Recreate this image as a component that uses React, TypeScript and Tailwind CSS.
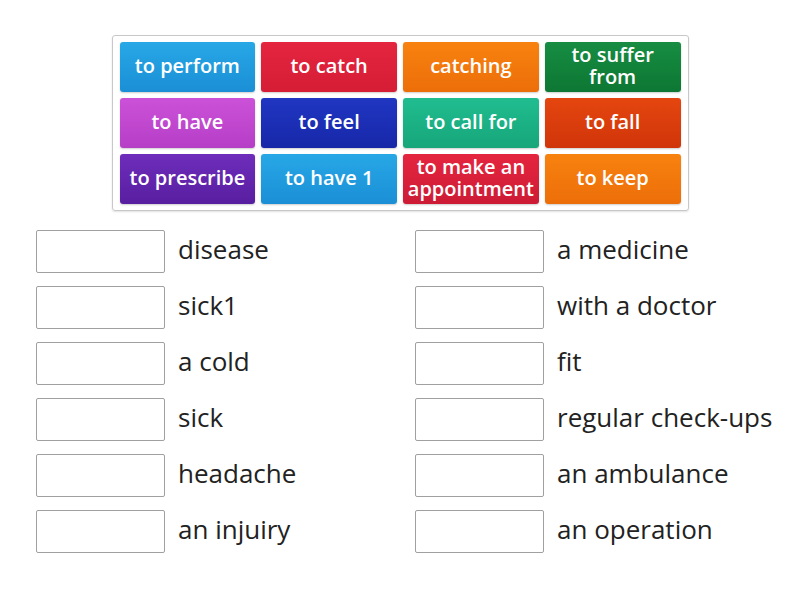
import React from 'react';

type Tile = { label: string; className: string };

const tiles: Tile[] = [
  { label: 'to perform', className: 'from-[#27a8e6] to-[#1b8fd6]' },
  { label: 'to catch', className: 'from-[#e5253f] to-[#d51d35]' },
  { label: 'catching', className: 'from-[#f8820f] to-[#ec6e09]' },
  { label: 'to suffer from', className: 'from-[#178d42] to-[#0d7733]' },
  { label: 'to have', className: 'from-[#cb52d8] to-[#b63dc6]' },
  { label: 'to feel', className: 'from-[#2036c2] to-[#1727a8]' },
  { label: 'to call for', className: 'from-[#20bd90] to-[#16a67a]' },
  { label: 'to fall', className: 'from-[#e5460f] to-[#d0350a]' },
  { label: 'to prescribe', className: 'from-[#6e2dbb] to-[#581ea0]' },
  { label: 'to have 1', className: 'from-[#27a8e6] to-[#1b8fd6]' },
  { label: 'to make an appointment', className: 'from-[#e5253f] to-[#cd1b35]' },
  { label: 'to keep', className: 'from-[#f8820f] to-[#ec6e09]' },
];

const leftItems = ['disease', 'sick1', 'a cold', 'sick', 'headache', 'an injuiry'];
const rightItems = [
  'a medicine',
  'with a doctor',
  'fit',
  'regular check-ups',
  'an ambulance',
  'an operation',
];

const MatchRow: React.FC<{ text: string }> = ({ text }) => (
  <div className="flex items-center h-[43px]">
    <div className="w-[129px] h-[43px] border border-[#a0a0a0] rounded-[2px] bg-white shrink-0" />
    <span className="ml-[13px] pb-[6px] text-[26px] leading-none text-[#222222] whitespace-nowrap">{text}</span>
  </div>
);

const App: React.FC = () => {
  return (
    <div
      className="w-[800px] h-[600px] bg-white overflow-hidden"
      style={{ fontFamily: '"Open Sans", "Liberation Sans", sans-serif' }}
    >
      <div className="pt-[35px] flex justify-center">
        <div className="w-[577px] border border-[#c8c8c8] rounded-[3px] px-[7px] py-[6px] shadow-[0_1px_2px_rgba(0,0,0,0.12)]">
          <div className="grid grid-cols-4 gap-[6px]">
            {tiles.map((t) => (
              <div
                key={t.label}
                className={`h-[50px] rounded-[3px] bg-gradient-to-b ${t.className} flex items-center justify-center text-center text-white font-semibold text-[20px] leading-[22px] px-1 pb-[2px] shadow-[0_1px_2px_rgba(0,0,0,0.2)]`}
              >
                {t.label}
              </div>
            ))}
          </div>
        </div>
      </div>

      <div className="mt-[19px] ml-[36px] grid grid-cols-[379px_1fr] gap-y-[13px]">
        {leftItems.map((l, i) => (
          <React.Fragment key={l}>
            <MatchRow text={l} />
            <MatchRow text={rightItems[i]} />
          </React.Fragment>
        ))}
      </div>
    </div>
  );
};

export default App;
